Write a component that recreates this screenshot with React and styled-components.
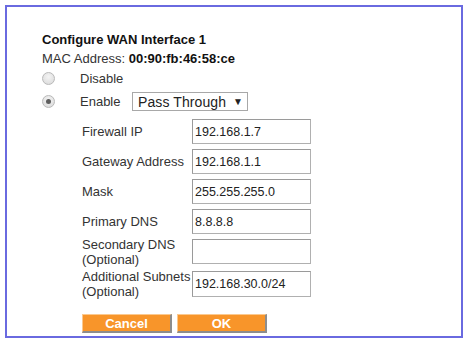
import React from "react";
import styled, { createGlobalStyle } from "styled-components";

const Global = createGlobalStyle`
  html, body { margin: 0; padding: 0; background: #fff; }
  body { font-family: "Liberation Sans", Arial, sans-serif; color: #222; }
  * { box-sizing: border-box; }
`;

const Frame = styled.div`
  margin: 5px;
  width: 458px;
  height: 333px;
  border: 2px solid #6a6ae0;
  padding: 25px 0 0 35px;
  display: flex;
  flex-direction: column;
`;

const Title = styled.div`
  font-size: 13px;
  font-weight: bold;
  line-height: 16px;
  color: #111;
`;

const MacLine = styled.div`
  margin-top: 3px;
  font-size: 13px;
  line-height: 16px;
  color: #333;
  b { color: #111; }
`;

const OptionRow = styled.div`
  display: flex;
  align-items: center;
  height: ${p => p.$h}px;
  margin-top: ${p => p.$mt}px;
`;

const Radio = styled.span`
  width: 13px;
  height: 13px;
  border-radius: 50%;
  border: 1px solid #b9b9b9;
  background: radial-gradient(circle at 50% 35%, #f4f4f4 0%, #d8d8d8 100%);
  display: flex;
  align-items: center;
  justify-content: center;
  margin-right: 25px;
  &::after {
    content: "";
    width: 5px;
    height: 5px;
    border-radius: 50%;
    background: ${p => (p.$checked ? "#5e5e5e" : "transparent")};
  }
`;

const OptionLabel = styled.span`
  font-size: 13px;
  color: #333;
  width: ${p => (p.$w ? p.$w + "px" : "auto")};
`;

const Select = styled.div`
  width: 116px;
  height: 19px;
  border: 1px solid #a8a8a8;
  background: #fff;
  display: flex;
  align-items: center;
  justify-content: space-between;
  padding: 0 4px 0 5px;
  font-size: 14px;
  color: #222;
  letter-spacing: 0.1px;
`;

const Arrow = styled.span`
  font-size: 10px;
  color: #222;
`;

const Fields = styled.div`
  margin-top: 8px;
  margin-left: 40px;
  display: flex;
  flex-direction: column;
`;

const FieldRow = styled.div`
  display: flex;
  align-items: center;
  height: ${p => p.$h}px;
  margin-top: ${p => p.$mt}px;
`;

const FieldLabel = styled.div`
  width: 110px;
  font-size: 13px;
  line-height: 15px;
  color: #333;
  white-space: nowrap;
`;

const Input = styled.div`
  width: 119px;
  height: 100%;
  border: 1px solid #b0b0b0;
  border-top-color: #9a9a9a;
  border-left-color: #9a9a9a;
  background: #fff;
  display: flex;
  align-items: center;
  padding-left: 2px;
  font-size: 12.5px;
  color: #222;
`;

const Buttons = styled.div`
  margin-top: 17px;
  margin-left: 40px;
  display: flex;
  gap: 5px;
`;

const Button = styled.div`
  width: 90px;
  height: 19px;
  background: #f8952a;
  border-top: 1px solid #fbc98f;
  border-left: 1px solid #fbc98f;
  border-right: 2px solid #8d8d8d;
  border-bottom: 2px solid #8d8d8d;
  color: #fff;
  font-size: 13px;
  font-weight: bold;
  display: flex;
  align-items: center;
  justify-content: center;
`;

const fields = [
  { label: "Firewall IP", value: "192.168.1.7", h: 25, mt: 0 },
  { label: "Gateway Address", value: "192.168.1.1", h: 25, mt: 5 },
  { label: "Mask", value: "255.255.255.0", h: 25, mt: 5 },
  { label: "Primary DNS", value: "8.8.8.8", h: 25, mt: 5 },
  { label: ["Secondary DNS", "(Optional)"], value: "", h: 25, mt: 5 },
  { label: ["Additional Subnets", "(Optional)"], value: "192.168.30.0/24", h: 26, mt: 7 },
];

export default function App() {
  return (
    <>
      <Global />
      <Frame>
        <Title>Configure WAN Interface 1</Title>
        <MacLine>
          MAC Address: <b>00:90:fb:46:58:ce</b>
        </MacLine>
        <OptionRow $h={16} $mt={3}>
          <Radio />
          <OptionLabel>Disable</OptionLabel>
        </OptionRow>
        <OptionRow $h={19} $mt={6}>
          <Radio $checked />
          <OptionLabel $w={52}>Enable</OptionLabel>
          <Select>
            <span>Pass Through</span>
            <Arrow>▼</Arrow>
          </Select>
        </OptionRow>
        <Fields>
          {fields.map((f, i) => (
            <FieldRow key={i} $h={f.h} $mt={f.mt}>
              <FieldLabel>
                {Array.isArray(f.label)
                  ? f.label.map((l, j) => <div key={j}>{l}</div>)
                  : f.label}
              </FieldLabel>
              <Input>{f.value}</Input>
            </FieldRow>
          ))}
        </Fields>
        <Buttons>
          <Button>Cancel</Button>
          <Button>OK</Button>
        </Buttons>
      </Frame>
    </>
  );
}
